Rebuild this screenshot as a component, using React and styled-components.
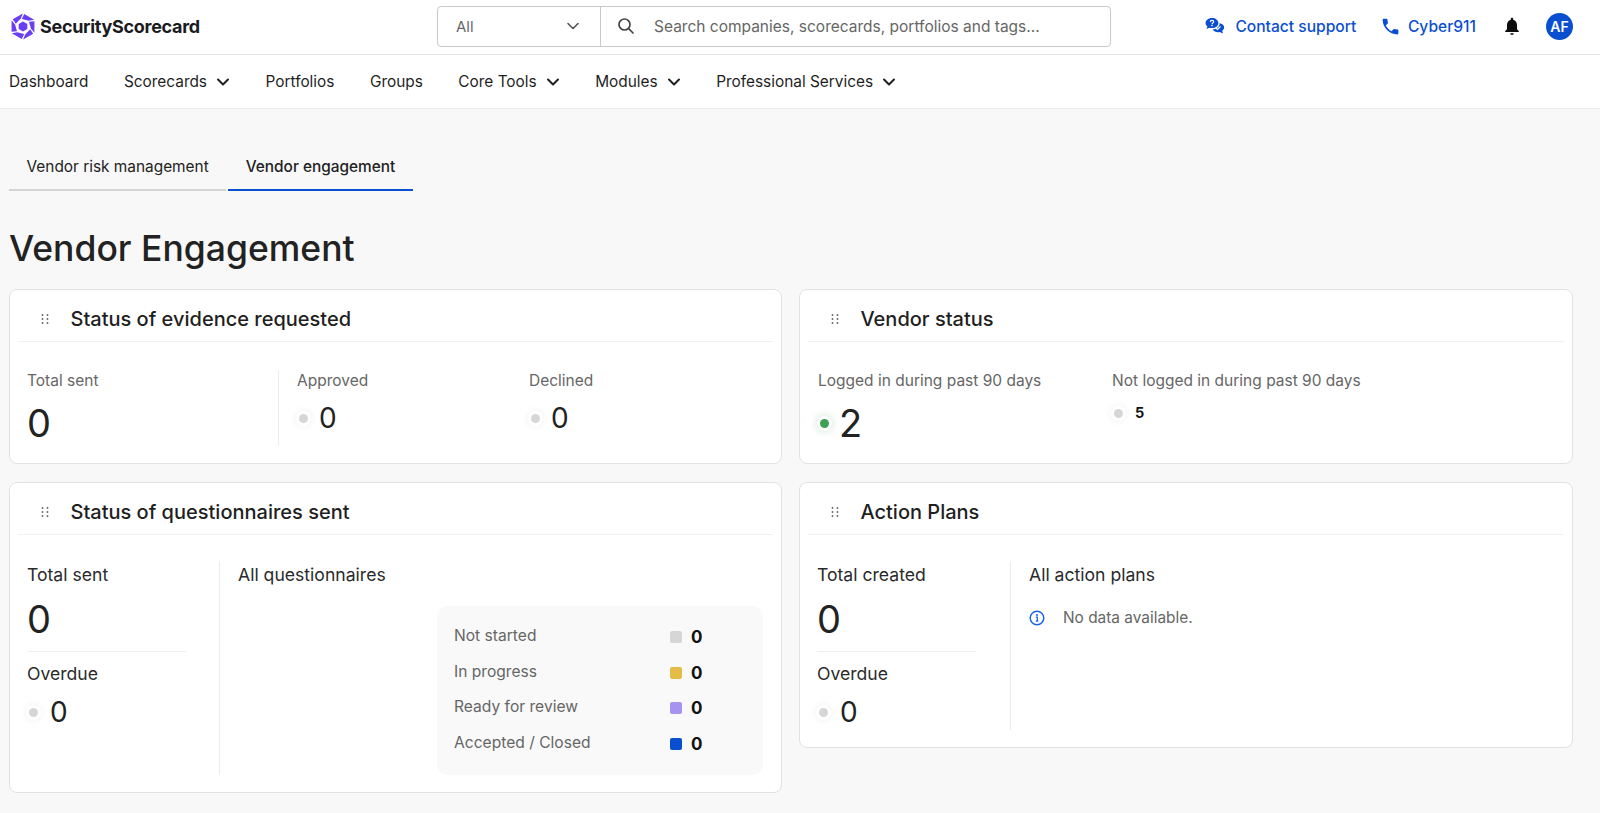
import React from 'react';
import styled, { createGlobalStyle } from 'styled-components';

const Global = createGlobalStyle`
  html, body { margin: 0; padding: 0; background: #f8f8f8; }
  body { font-family: Inter, "Liberation Sans", sans-serif; color: #1f1f1f; -webkit-font-smoothing: antialiased; }
`;

const Page = styled.div`
  width: 1600px;
  height: 813px;
  overflow: hidden;
  background: #f8f8f8;
`;
const TopBar = styled.header`
  height: 54px;
  background: #fff;
  border-bottom: 1px solid #e4e4e4;
  display: flex;
  align-items: center;
  padding: 0 27px 0 11px;
`;
const LogoWrap = styled.div`
  display: flex;
  align-items: center;
  gap: 5px;
  width: 426px;
  margin-top: -2px;
`;
const Wordmark = styled.span`
  font-size: 18px;
  font-weight: 700;
  letter-spacing: -0.3px;
  color: #1b1b1f;
`;
const SearchBox = styled.div`
  width: 674px;
  height: 41px;
  box-sizing: border-box;
  border: 1px solid #c9c9c9;
  border-radius: 4px;
  display: flex;
  align-items: center;
  margin-top: -2px;
`;
const ScopeSelect = styled.div`
  width: 163px;
  height: 100%;
  box-sizing: border-box;
  border-right: 1px solid #c9c9c9;
  display: flex;
  align-items: center;
  justify-content: space-between;
  padding: 0 20px 0 18px;
  font-size: 15px;
  color: #6a6a6a;
`;
const SearchField = styled.div`
  display: flex;
  align-items: center;
  gap: 19px;
  padding-left: 16px;
  font-size: 15.5px;
  color: #666;
`;
const TopActions = styled.div`
  margin-left: auto;
  display: flex;
  align-items: center;
  margin-top: -2px;
`;
const ActionLink = styled.a`
  display: flex;
  align-items: center;
  gap: ${p => p.$gap || 9}px;
  margin-right: ${p => p.$mr || 26}px;
  color: #0a4fd0;
  font-size: 15.6px;
  font-weight: 500;
`;
const BellWrap = styled.span`
  display: flex;
  margin-right: 25px;
`;
const Avatar = styled.div`
  width: 27px;
  height: 27px;
  border-radius: 50%;
  background: #0a4fd0;
  color: #fff;
  font-size: 14px;
  font-weight: 600;
  display: flex;
  align-items: center;
  justify-content: center;
`;
const NavBar = styled.nav`
  height: 53px;
  background: #fff;
  border-bottom: 1px solid #ececec;
  display: flex;
  align-items: center;
  padding-left: 9px;
  gap: 35.5px;
`;
const NavItem = styled.div`
  display: flex;
  align-items: center;
  gap: 9px;
  font-size: 15.4px;
  color: #1f1f1f;
`;
const Main = styled.main`
  padding: 40px 27px 0 9px;
`;
const Tabs = styled.div`
  display: flex;
  gap: 2px;
`;
const Tab = styled.div`
  height: 42px;
  box-sizing: border-box;
  padding: 0 17.5px 6px 17.5px;
  display: flex;
  align-items: center;
  font-size: 15.4px;
  font-weight: ${p => (p.$active ? 500 : 400)};
  color: #222;
  border-bottom: 2px solid ${p => (p.$active ? '#0a4fd0' : '#d4d4d4')};
`;
const Title = styled.h1`
  margin: 36px 0 0;
  height: 44px;
  line-height: 44px;
  font-size: 35.5px;
  font-weight: 500;
  color: #222;
`;
const Grid = styled.div`
  margin-top: 18px;
  display: grid;
  grid-template-columns: 773px 774px;
  column-gap: 17px;
  row-gap: 18px;
  align-items: start;
`;
const Card = styled.section`
  box-sizing: border-box;
  height: ${p => p.$h}px;
  background: #fff;
  border: 1px solid #e2e2e2;
  border-radius: 8px;
  padding: 0 8px;
  display: flex;
  flex-direction: column;
`;
const CardHead = styled.div`
  height: 52px;
  flex: none;
  box-sizing: border-box;
  border-bottom: 1px solid #f2f2f2;
  display: flex;
  align-items: center;
  padding: 7px 0 0 23px;
  gap: 20.5px;
`;
const CardTitle = styled.h2`
  margin: 0;
  font-size: 20px;
  font-weight: 500;
  color: #1f1f1f;
`;
const Row = styled.div`
  display: flex;
  padding-top: ${p => p.$pt || 0}px;
`;
const Stat = styled.div`
  box-sizing: border-box;
  width: ${p => p.$w}px;
  height: ${p => p.$h || 'auto'};
  padding-left: ${p => p.$pl || 0}px;
  border-right: ${p => (p.$rule ? '1px solid #ececec' : 'none')};
  flex: none;
`;
const MutedLabel = styled.div`
  font-size: 15.5px;
  line-height: 20px;
  margin-top: 1px;
  color: #666;
`;
const DarkLabel = styled.div`
  font-size: 17.6px;
  line-height: 22px;
  color: #2a2a2a;
`;
const BigValue = styled.div`
  font-size: 38px;
  line-height: 46px;
  color: #222;
  margin-top: ${p => p.$mt || 0}px;
`;
const ValueRow = styled.div`
  display: flex;
  align-items: center;
  gap: ${p => p.$gap || 11}px;
  margin-top: ${p => p.$mt || 0}px;
  padding-left: 2px;
`;
const Dot = styled.span`
  width: 9px;
  height: 9px;
  border-radius: 50%;
  flex: none;
  background: ${p => p.$c || '#d6d6d6'};
  box-shadow: 0 0 0 3px #fff, 0 0 7px 4px ${p => p.$glow || 'rgba(0,0,0,0.05)'};
`;
const MidValue = styled.span`
  font-size: ${p => p.$size || 28}px;
  line-height: ${p => p.$lh || 34}px;
  font-weight: ${p => p.$weight || 400};
  color: ${p => p.$color || '#222'};
`;
const SideRule = styled.div`
  height: 1px;
  width: 159px;
  background: #efefef;
  margin: 9px 0 11px;
`;
const LeftCol = styled.div`
  box-sizing: border-box;
  width: ${p => p.$w}px;
  flex: none;
  padding-left: 9px;
  border-right: 1px solid #ececec;
  height: ${p => p.$h}px;
  padding-top: 3px;
`;
const RightCol = styled.div`
  flex: 1;
  padding-left: 18px;
  padding-top: 3px;
  position: relative;
`;
const Legend = styled.div`
  position: absolute;
  left: 217px;
  top: 45px;
  width: 326px;
  height: 169px;
  box-sizing: border-box;
  background: #f9f9f9;
  border-radius: 10px;
  padding: 21px 17px;
  display: flex;
  flex-direction: column;
  gap: 15.7px;
`;
const LegendRow = styled.div`
  display: flex;
  align-items: center;
  height: 20px;
  font-size: 15.6px;
  color: #666;
`;
const LegendName = styled.span`
  width: 216px;
  margin-top: -3px;
`;
const Swatch = styled.span`
  width: 12px;
  height: 12px;
  border-radius: 2px;
  background: ${p => p.$c};
  margin-right: 9px;
`;
const LegendCount = styled.span`
  font-size: 17px;
  font-weight: 700;
  color: #111;
`;
const NoData = styled.div`
  display: flex;
  align-items: center;
  gap: 18px;
  font-size: 15.4px;
  color: #666;
  margin-top: 22px;
`;

const Chevron = ({ size = 14, color = '#1f1f1f', w = 2 }) => (
  <svg width={size} height={size} viewBox="0 0 14 14" fill="none">
    <path d="M2 4.5 7 9.5 12 4.5" stroke={color} strokeWidth={w} strokeLinecap="round" strokeLinejoin="round" />
  </svg>
);

const Logo = () => (
  <svg width="24" height="27" viewBox="0 0 24 27" fill="#6a3ef2">
    {[0, 60, 120, 180, 240, 300].map(a => (
      <polygon
        key={a}
        points="13.2,1 23.2,6.800 17.800,7.700 10.800,5.900"
        transform={`rotate(${a} 12 13.500)`}
      />
    ))}
    <polygon points="12,8.500 16.300,11 16.300,16 12,18.500 7.700,16 7.700,11" />
  </svg>
);

const SearchIcon = () => (
  <svg width="18" height="18" viewBox="0 0 18 18" fill="none" stroke="#444" strokeWidth="1.7" strokeLinecap="round">
    <circle cx="7.5" cy="7.5" r="5.5" />
    <path d="M11.7 11.7 16 16" />
  </svg>
);

const ChatIcon = () => (
  <svg width="21" height="18" viewBox="0 0 21 18">
    <path fill="#0a4fd0" d="M7 1C3.400 1 .6 3.200.6 6c0 1.400.7 2.600 1.800 3.500L1.400 12l3-1.200c.8.200 1.700.3 2.600.3 3.500 0 6.400-2.200 6.400-5.100S10.500 1 7 1Z" />
    <path fill="#0a4fd0" d="M14.600 6.200c.1 3.500-3.100 6-6.900 6.200 1 1.700 3 2.800 5.300 2.800.6 0 1.100-.1 1.600-.2l3.400 1.500-.8-2.800c1.200-.9 2-2.100 2-3.500 0-1.900-1.900-3.500-4.600-4Z" />
    <path fill="none" stroke="#fff" strokeWidth="1.100" d="M5.300 4.900c0-1 .8-1.500 1.700-1.500s1.700.5 1.700 1.400c0 1.200-1.700 1.200-1.700 2.400" />
    <circle cx="7" cy="8.600" r=".8" fill="#fff" />
    <path fill="none" stroke="#fff" strokeWidth="1.100" d="m10.800 11 1.700 1.500 3-3" />
  </svg>
);

const PhoneIcon = () => (
  <svg width="21" height="21" viewBox="0 0 24 24">
    <path fill="#0a4fd0" d="M6.620 10.790c1.440 2.830 3.760 5.140 6.590 6.590l2.200-2.200c.27-.27.670-.36 1.020-.24 1.120.37 2.330.57 3.570.57.550 0 1 .45 1 1V20c0 .55-.45 1-1 1-9.390 0-17-7.610-17-17 0-.55.450-1 1-1h3.500c.55 0 1 .45 1 1 0 1.250.2 2.450.57 3.570.11.350.03.740-.25 1.020l-2.200 2.200Z" />
  </svg>
);

const BellIcon = () => (
  <svg width="18" height="19" viewBox="0 0 18 19">
    <path fill="#0d0d0d" d="M9 .8c-.7 0-1.200.5-1.200 1.200v.7C5.300 3.300 4 5.400 4 8v4.200L2.200 14v1h13.600v-1L14 12.200V8c0-2.600-1.300-4.700-3.800-5.300V2c0-.7-.5-1.200-1.200-1.200Z" />
    <path fill="#0d0d0d" d="M7.200 16.200a1.800 1.800 0 0 0 3.600 0Z" />
  </svg>
);

const Grip = () => (
  <svg width="9" height="13" viewBox="0 0 9 13" fill="#666">
    {[1, 5, 9].map(y => [1.500, 6.500].map(x => <circle key={`${x}-${y}`} cx={x} cy={y + 1} r="0.95" />))}
  </svg>
);

const InfoIcon = () => (
  <svg width="16" height="16" viewBox="0 0 16 16" fill="none">
    <circle cx="8" cy="8" r="6.800" stroke="#1a66e8" strokeWidth="1.500" />
    <circle cx="8" cy="4.900" r="1" fill="#1a66e8" />
    <path d="M6.800 7.200H8.300V11M6.800 11.200H9.400" stroke="#1a66e8" strokeWidth="1.300" />
  </svg>
);

const navItems = [
  ['Dashboard', false],
  ['Scorecards', true],
  ['Portfolios', false],
  ['Groups', false],
  ['Core Tools', true],
  ['Modules', true],
  ['Professional Services', true],
];

const legend = [
  ['Not started', '#d6d6d6'],
  ['In progress', '#e3bd45'],
  ['Ready for review', '#a892f0'],
  ['Accepted / Closed', '#0a4fd0'],
];

const Header = ({ title }) => (
  <CardHead>
    <Grip />
    <CardTitle>{title}</CardTitle>
  </CardHead>
);

const SideStats = ({ first, h, w }) => (
  <LeftCol $w={w} $h={h}>
    <DarkLabel>{first}</DarkLabel>
    <BigValue $mt={10}>0</BigValue>
    <SideRule />
    <DarkLabel>Overdue</DarkLabel>
    <ValueRow $mt={10} $gap={12}>
      <Dot />
      <MidValue>0</MidValue>
    </ValueRow>
  </LeftCol>
);

export default function App() {
  return (
    <Page>
      <Global />
      <TopBar>
        <LogoWrap>
          <Logo />
          <Wordmark>SecurityScorecard</Wordmark>
        </LogoWrap>
        <SearchBox>
          <ScopeSelect>
            All
            <Chevron size={14} color="#555" w={1.6} />
          </ScopeSelect>
          <SearchField>
            <SearchIcon />
            Search companies, scorecards, portfolios and tags...
          </SearchField>
        </SearchBox>
        <TopActions>
          <ActionLink $mr={23.5}>
            <ChatIcon />
            Contact support
          </ActionLink>
          <ActionLink $gap={7} $mr={27}>
            <PhoneIcon />
            Cyber911
          </ActionLink>
          <BellWrap>
            <BellIcon />
          </BellWrap>
          <Avatar>AF</Avatar>
        </TopActions>
      </TopBar>
      <NavBar>
        {navItems.map(([label, hasMenu]) => (
          <NavItem key={label}>
            {label}
            {hasMenu && <Chevron />}
          </NavItem>
        ))}
      </NavBar>
      <Main>
        <Tabs>
          <Tab>Vendor risk management</Tab>
          <Tab $active>Vendor engagement</Tab>
        </Tabs>
        <Title>Vendor Engagement</Title>
        <Grid>
          <Card $h={175}>
            <Header title="Status of evidence requested" />
            <Row $pt={28}>
              <Stat $w={261} $h="76px" $pl={9} $rule>
                <MutedLabel>Total sent</MutedLabel>
                <BigValue $mt={9}>0</BigValue>
              </Stat>
              <Stat $w={250} $pl={18}>
                <MutedLabel>Approved</MutedLabel>
                <ValueRow $mt={10}>
                  <Dot />
                  <MidValue>0</MidValue>
                </ValueRow>
              </Stat>
              <Stat $w={200}>
                <MutedLabel>Declined</MutedLabel>
                <ValueRow $mt={10}>
                  <Dot />
                  <MidValue>0</MidValue>
                </ValueRow>
              </Stat>
            </Row>
          </Card>
          <Card $h={175}>
            <Header title="Vendor status" />
            <Row $pt={28}>
              <Stat $w={304} $pl={10}>
                <MutedLabel>Logged in during past 90 days</MutedLabel>
                <ValueRow $mt={9} $gap={10}>
                  <Dot $c="#3f9f55" $glow="rgba(63,159,85,0.22)" />
                  <MidValue $size={38} $lh={46}>2</MidValue>
                </ValueRow>
              </Stat>
              <Stat $w={300}>
                <MutedLabel>Not logged in during past 90 days</MutedLabel>
                <ValueRow $mt={10} $gap={12}>
                  <Dot />
                  <MidValue $size={14.500} $lh={24} $weight={700} $color="#111">5</MidValue>
                </ValueRow>
              </Stat>
            </Row>
          </Card>
          <Card $h={311}>
            <Header title="Status of questionnaires sent" />
            <Row $pt={26}>
              <SideStats first="Total sent" w={202} h={214} />
              <RightCol>
                <DarkLabel>All questionnaires</DarkLabel>
                <Legend>
                  {legend.map(([name, c]) => (
                    <LegendRow key={name}>
                      <LegendName>{name}</LegendName>
                      <Swatch $c={c} />
                      <LegendCount>0</LegendCount>
                    </LegendRow>
                  ))}
                </Legend>
              </RightCol>
            </Row>
          </Card>
          <Card $h={266}>
            <Header title="Action Plans" />
            <Row $pt={26}>
              <SideStats first="Total created" w={203} h={169} />
              <RightCol>
                <DarkLabel>All action plans</DarkLabel>
                <NoData>
                  <InfoIcon />
                  No data available.
                </NoData>
              </RightCol>
            </Row>
          </Card>
        </Grid>
      </Main>
    </Page>
  );
}
